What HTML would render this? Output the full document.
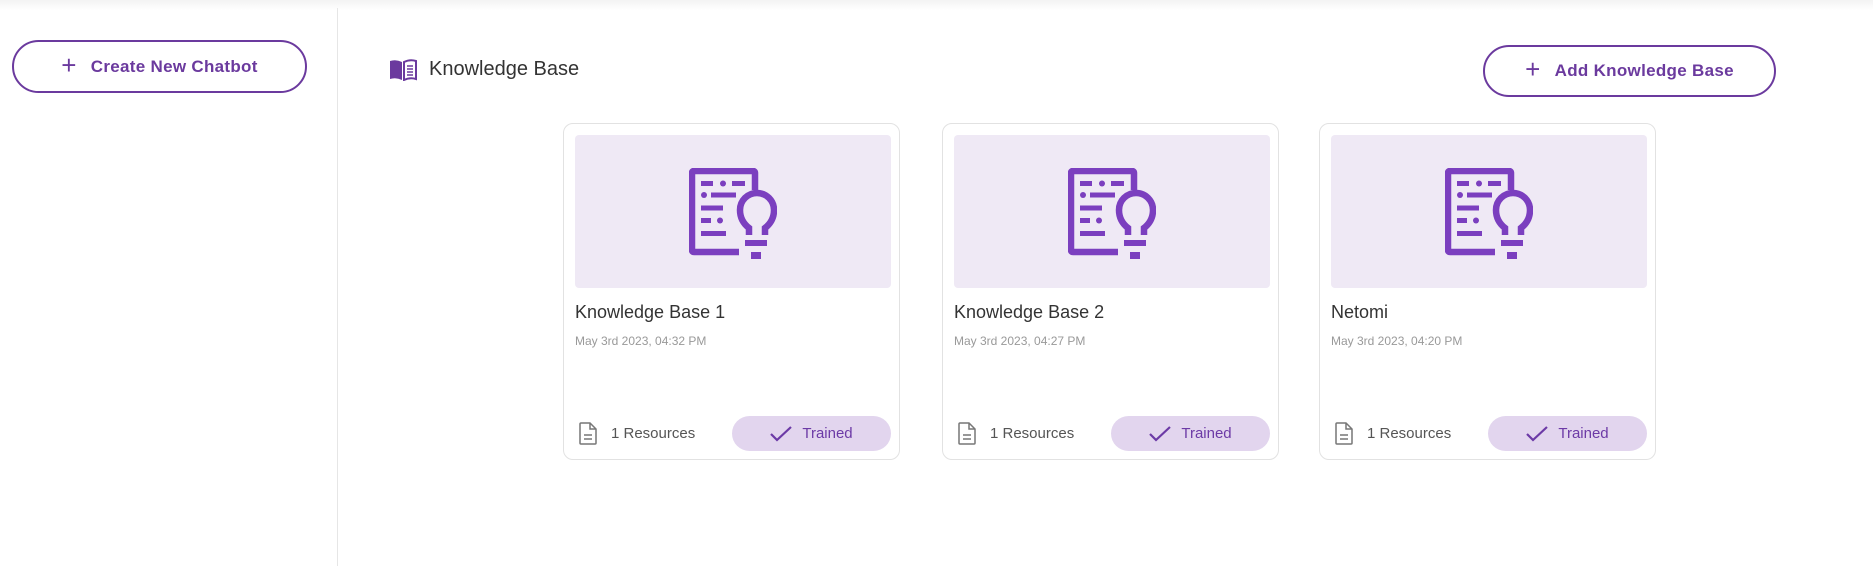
<!DOCTYPE html><html><head><style>
*{box-sizing:border-box;margin:0;padding:0}
body{width:1873px;height:566px;background:#fff;font-family:"Liberation Sans",sans-serif;position:relative;overflow:hidden}
.top{position:absolute;left:0;top:0;width:1873px;height:10px;background:linear-gradient(#f3f3f3,#fff)}
.side{position:absolute;left:337px;top:8px;width:1px;height:558px;background:#e6e6e6}
.btn{position:absolute;border:2px solid #6b3a9e;border-radius:27px;color:#6b3a9e;font-weight:bold;font-size:17px;display:flex;align-items:center;justify-content:center;gap:14px;letter-spacing:.3px}
.btn span.p{font-size:26px;font-weight:normal;margin-top:-3px}
.h{position:absolute;left:389px;top:58px;display:flex;align-items:center;gap:12px;font-size:20px;color:#333}
.card{position:absolute;top:123px;width:337px;height:337px;border:1px solid #e2e2e2;border-radius:10px}
.img{position:absolute;left:11px;top:11px;width:316px;height:153px;background:#efe9f5;border-radius:4px}
.img svg{position:absolute;left:114px;top:33px}
.t{position:absolute;left:11px;top:178px;font-size:18px;color:#333}
.d{position:absolute;left:11px;top:210px;font-size:12px;color:#999}
.r{position:absolute;left:15px;top:298px;display:flex;align-items:center;gap:14px;font-size:15px;color:#555}
.pill{position:absolute;left:168px;top:292px;width:159px;height:35px;border-radius:18px;background:#e2d5ee;color:#6c3aa6;font-size:15px;display:flex;align-items:center;justify-content:center;gap:10px}
</style></head><body>
<div class="top"></div><div class="side"></div>
<div class="btn" style="left:12px;top:40px;width:295px;height:53px"><span class="p">+</span>Create New Chatbot</div>
<div class="h"><svg width="28" height="22" viewBox="0 0 28 22"><path d="M1 2 Q7 0 13 3 L13 21 Q7 18 1 20Z" fill="#6b3a9e"/><path d="M15 3 Q21 0 27 2 L27 20 Q21 18 15 21Z" fill="none" stroke="#6b3a9e" stroke-width="2"/><path d="M18 7h6M18 10h6M18 13h6M18 16h6" stroke="#6b3a9e" stroke-width="1.5"/></svg>Knowledge Base</div>
<div class="btn" style="left:1483px;top:45px;width:293px;height:52px"><span class="p">+</span>Add Knowledge Base</div>
<div class="card" style="left:563px"><div class="img"><svg width="88" height="92" viewBox="0 0 88 92"><g fill="none" stroke="#7b3fbf" stroke-width="6.5"><path d="M50 84H5Q3 84 3 82V5Q3 3 5 3H64Q66 3 66 5V22"/><path d="M60 67 V60 Q51 53 51 42 A17 17 0 0 1 85 42 Q85 53 76 60 V67"/></g><g fill="#7b3fbf"><rect x="12" y="13" width="12" height="5"/><circle cx="34" cy="15.5" r="3"/><rect x="43" y="13" width="13" height="5"/><circle cx="15" cy="27" r="3"/><rect x="22" y="24.5" width="25" height="5"/><rect x="12" y="37.5" width="22" height="5"/><rect x="12" y="50" width="10" height="5"/><circle cx="31" cy="52.5" r="3"/><rect x="12" y="63" width="25" height="5"/><rect x="56" y="72" width="22" height="6"/><rect x="62" y="84" width="10" height="7"/></g></svg></div><div class="t">Knowledge Base 1</div><div class="d">May 3rd 2023, 04:32 PM</div><div class="r"><svg width="18" height="23" viewBox="0 0 18 23"><path d="M2 1H11L17 7V21Q17 22 16 22H2Q1 22 1 21V2Q1 1 2 1Z M11 1V7H17 M5 13h8M5 17h8" fill="none" stroke="#777" stroke-width="1.5"/></svg>1 Resources</div><div class="pill"><svg width="22" height="16" viewBox="0 0 22 16"><path d="M1 8L7 14L21 1" fill="none" stroke="#6c3aa6" stroke-width="2.2"/></svg>Trained</div></div>
<div class="card" style="left:942px"><div class="img"><svg width="88" height="92" viewBox="0 0 88 92"><g fill="none" stroke="#7b3fbf" stroke-width="6.5"><path d="M50 84H5Q3 84 3 82V5Q3 3 5 3H64Q66 3 66 5V22"/><path d="M60 67 V60 Q51 53 51 42 A17 17 0 0 1 85 42 Q85 53 76 60 V67"/></g><g fill="#7b3fbf"><rect x="12" y="13" width="12" height="5"/><circle cx="34" cy="15.5" r="3"/><rect x="43" y="13" width="13" height="5"/><circle cx="15" cy="27" r="3"/><rect x="22" y="24.5" width="25" height="5"/><rect x="12" y="37.5" width="22" height="5"/><rect x="12" y="50" width="10" height="5"/><circle cx="31" cy="52.5" r="3"/><rect x="12" y="63" width="25" height="5"/><rect x="56" y="72" width="22" height="6"/><rect x="62" y="84" width="10" height="7"/></g></svg></div><div class="t">Knowledge Base 2</div><div class="d">May 3rd 2023, 04:27 PM</div><div class="r"><svg width="18" height="23" viewBox="0 0 18 23"><path d="M2 1H11L17 7V21Q17 22 16 22H2Q1 22 1 21V2Q1 1 2 1Z M11 1V7H17 M5 13h8M5 17h8" fill="none" stroke="#777" stroke-width="1.5"/></svg>1 Resources</div><div class="pill"><svg width="22" height="16" viewBox="0 0 22 16"><path d="M1 8L7 14L21 1" fill="none" stroke="#6c3aa6" stroke-width="2.2"/></svg>Trained</div></div>
<div class="card" style="left:1319px"><div class="img"><svg width="88" height="92" viewBox="0 0 88 92"><g fill="none" stroke="#7b3fbf" stroke-width="6.5"><path d="M50 84H5Q3 84 3 82V5Q3 3 5 3H64Q66 3 66 5V22"/><path d="M60 67 V60 Q51 53 51 42 A17 17 0 0 1 85 42 Q85 53 76 60 V67"/></g><g fill="#7b3fbf"><rect x="12" y="13" width="12" height="5"/><circle cx="34" cy="15.5" r="3"/><rect x="43" y="13" width="13" height="5"/><circle cx="15" cy="27" r="3"/><rect x="22" y="24.5" width="25" height="5"/><rect x="12" y="37.5" width="22" height="5"/><rect x="12" y="50" width="10" height="5"/><circle cx="31" cy="52.5" r="3"/><rect x="12" y="63" width="25" height="5"/><rect x="56" y="72" width="22" height="6"/><rect x="62" y="84" width="10" height="7"/></g></svg></div><div class="t">Netomi</div><div class="d">May 3rd 2023, 04:20 PM</div><div class="r"><svg width="18" height="23" viewBox="0 0 18 23"><path d="M2 1H11L17 7V21Q17 22 16 22H2Q1 22 1 21V2Q1 1 2 1Z M11 1V7H17 M5 13h8M5 17h8" fill="none" stroke="#777" stroke-width="1.5"/></svg>1 Resources</div><div class="pill"><svg width="22" height="16" viewBox="0 0 22 16"><path d="M1 8L7 14L21 1" fill="none" stroke="#6c3aa6" stroke-width="2.2"/></svg>Trained</div></div>
</body></html>
